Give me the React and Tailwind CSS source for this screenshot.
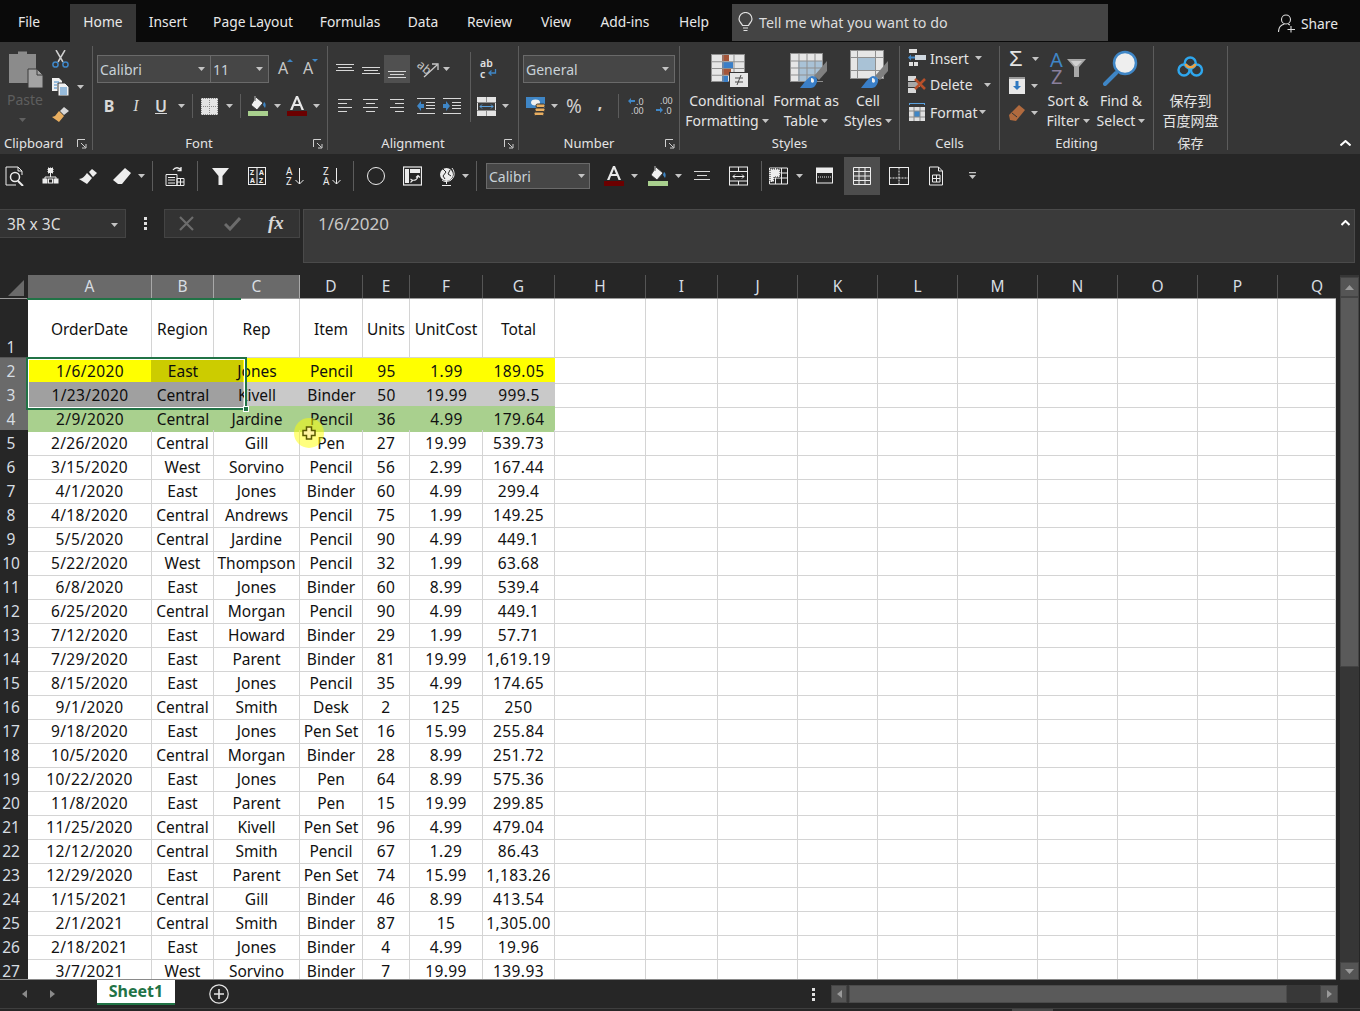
import React from 'react'

const COLS = 'grid grid-cols-[28px_124px_62px_86px_63px_47px_73px_72px_91px_72px_80px_80px_80px_80px_80px_80px_80px_58px]'
const LETTERS = ['A', 'B', 'C', 'D', 'E', 'F', 'G', 'H', 'I', 'J', 'K', 'L', 'M', 'N', 'O', 'P', 'Q']

const DATA = [
  ['OrderDate', 'Region', 'Rep', 'Item', 'Units', 'UnitCost', 'Total'],
  ['1/6/2020', 'East', 'Jones', 'Pencil', '95', '1.99', '189.05'],
  ['1/23/2020', 'Central', 'Kivell', 'Binder', '50', '19.99', '999.5'],
  ['2/9/2020', 'Central', 'Jardine', 'Pencil', '36', '4.99', '179.64'],
  ['2/26/2020', 'Central', 'Gill', 'Pen', '27', '19.99', '539.73'],
  ['3/15/2020', 'West', 'Sorvino', 'Pencil', '56', '2.99', '167.44'],
  ['4/1/2020', 'East', 'Jones', 'Binder', '60', '4.99', '299.4'],
  ['4/18/2020', 'Central', 'Andrews', 'Pencil', '75', '1.99', '149.25'],
  ['5/5/2020', 'Central', 'Jardine', 'Pencil', '90', '4.99', '449.1'],
  ['5/22/2020', 'West', 'Thompson', 'Pencil', '32', '1.99', '63.68'],
  ['6/8/2020', 'East', 'Jones', 'Binder', '60', '8.99', '539.4'],
  ['6/25/2020', 'Central', 'Morgan', 'Pencil', '90', '4.99', '449.1'],
  ['7/12/2020', 'East', 'Howard', 'Binder', '29', '1.99', '57.71'],
  ['7/29/2020', 'East', 'Parent', 'Binder', '81', '19.99', '1,619.19'],
  ['8/15/2020', 'East', 'Jones', 'Pencil', '35', '4.99', '174.65'],
  ['9/1/2020', 'Central', 'Smith', 'Desk', '2', '125', '250'],
  ['9/18/2020', 'East', 'Jones', 'Pen Set', '16', '15.99', '255.84'],
  ['10/5/2020', 'Central', 'Morgan', 'Binder', '28', '8.99', '251.72'],
  ['10/22/2020', 'East', 'Jones', 'Pen', '64', '8.99', '575.36'],
  ['11/8/2020', 'East', 'Parent', 'Pen', '15', '19.99', '299.85'],
  ['11/25/2020', 'Central', 'Kivell', 'Pen Set', '96', '4.99', '479.04'],
  ['12/12/2020', 'Central', 'Smith', 'Pencil', '67', '1.29', '86.43'],
  ['12/29/2020', 'East', 'Parent', 'Pen Set', '74', '15.99', '1,183.26'],
  ['1/15/2021', 'Central', 'Gill', 'Binder', '46', '8.99', '413.54'],
  ['2/1/2021', 'Central', 'Smith', 'Binder', '87', '15', '1,305.00'],
  ['2/18/2021', 'East', 'Jones', 'Binder', '4', '4.99', '19.96'],
  ['3/7/2021', 'West', 'Sorvino', 'Binder', '7', '19.99', '139.93'],
]

const ROW_FILL = { 1: 'bg-[#ffff00]', 2: 'bg-[#c9c9c9]', 3: 'bg-[#a9d08e]' }

const Caret = ({ className = '' }) => (
  <svg className={`shrink-0 ${className}`} width="7" height="4" viewBox="0 0 7 4"><path d="M0 0h7L3.5 4z" fill="#c4c4c4" /></svg>
)

const Divider = ({ className = '' }) => <div className={`w-px shrink-0 bg-[#5c5c5c] ${className}`} />

const Launcher = ({ className = '' }) => (
  <svg className={`shrink-0 ${className}`} width="10" height="10" viewBox="0 0 10 10" fill="none" stroke="#cfcfcf">
    <path d="M.5 8V.5H8" />
    <path d="M4 4l4.5 4.5M9 5v4H5" />
  </svg>
)

const Lines = ({ rows, w = 18 }) => (
  <svg className="shrink-0" width={w} height="20" viewBox={`0 0 ${w} 20`} stroke="#d8d8d8">
    {rows.map(([x1, x2, y], i) => <path key={i} d={`M${x1} ${y}.5H${x2}`} />)}
  </svg>
)

const ClipIcon = () => (
  <svg className="shrink-0" width="35" height="38" viewBox="0 0 35 38">
    <path d="M0 4h9V1.500h9V4h9v29H0z" fill="#8b8b8b" />
    <path d="M19 19h9l6 6v13H19z" fill="#a3a3a3" stroke="#3a3a3a" />
    <path d="M28 19v6h6" fill="none" stroke="#3a3a3a" />
  </svg>
)

const CutIcon = () => (
  <svg className="shrink-0" width="17" height="18" viewBox="0 0 17 18" fill="none">
    <path d="M4 0l7 12M13 0L6 12" stroke="#cfcfcf" strokeWidth="1.500" />
    <circle cx="3.500" cy="14.500" r="2.600" stroke="#3f86c6" strokeWidth="1.500" />
    <circle cx="13.500" cy="14.500" r="2.600" stroke="#3f86c6" strokeWidth="1.500" />
  </svg>
)

const CopyIcon = () => (
  <svg className="shrink-0" width="17" height="18" viewBox="0 0 17 18">
    <path d="M0 0h7l3 3v10H0z" fill="#f0f0f0" />
    <path d="M6 5h7l4 4v9H6z" fill="#f0f0f0" stroke="#363636" />
    <path d="M2 4h5M2 7h3M2 10h3" stroke="#3f86c6" />
    <path d="M8 10h7M8 12h7M8 14h7M8 16h7" stroke="#3f86c6" />
  </svg>
)

const PainterIcon = () => (
  <svg className="shrink-0" width="18" height="16" viewBox="0 0 18 16">
    <path d="M12 0l5 4-5 4-4-4z" fill="#d8d8d8" />
    <path d="M7 4l5 5-5 6-7-5 3-1z" fill="#e8ae60" />
  </svg>
)

const GrowA = ({ up }) => (
  <svg className="shrink-0 overflow-visible" width="15" height="20" viewBox="0 0 15 20">
    <text x="0" y="15" fontSize="16" fontFamily="'Noto Sans', sans-serif" fill="#c8c8c8">A</text>
    <path d={up ? 'M9 3l3-3 3 3z' : 'M9 0h6l-3 3z'} fill="#3f86c6" />
  </svg>
)

const BorderIcon = () => (
  <svg className="shrink-0" width="17" height="17" viewBox="0 0 17 17">
    <rect width="17" height="17" fill="#e4e4e4" />
    <path d="M8.500 0v17M0 8.500h17M.5 0v17M16.500 0v17M0 .5h17M0 16.500h17" stroke="#8c8c8c" strokeDasharray="1 1" />
  </svg>
)

const FillIcon = ({ w = 20 }) => (
  <svg className="shrink-0" width={w} height="20" viewBox="0 0 20 20">
    <path d="M8 1l7 6-6 7-6-5z" fill="#f0f0f0" stroke="#363636" />
    <path d="M7 0v5" stroke="#8c8c8c" strokeWidth="1.500" />
    <path d="M16 6c2 1 2 4 1 6l-2-3z" fill="#3f86c6" />
    <rect y="15" width="20" height="5" fill="#a9d08e" />
  </svg>
)

const FontAIcon = () => (
  <svg className="shrink-0" width="20" height="20" viewBox="0 0 20 20">
    <path d="M3 14L9 0h2l6 14h-2.500l-1.500-4H7l-1.500 4zM8 8h4l-2-5z" fill="#e8e8e8" fillRule="evenodd" />
    <rect y="15" width="20" height="5" fill="#6b0000" />
  </svg>
)

const OrientIcon = () => (
  <svg className="shrink-0 overflow-visible" width="24" height="20" viewBox="0 0 24 20" fill="none" stroke="#c8c8c8">
    <text x="1" y="11" fontSize="12" fill="#c8c8c8" stroke="none" fontFamily="'Noto Sans', sans-serif" transform="rotate(40 6 8)">ab</text>
    <path d="M8 18L21 6M16 5h6v6" strokeWidth="1.300" />
  </svg>
)

const WrapIcon = () => (
  <svg className="shrink-0 overflow-visible" width="17" height="20" viewBox="0 0 17 20">
    <text x="0" y="8" fontSize="10.500" fill="#e0e0e0" fontFamily="'Noto Sans', sans-serif" fontWeight="600">ab</text>
    <text x="0" y="19" fontSize="10.500" fill="#e0e0e0" fontFamily="'Noto Sans', sans-serif" fontWeight="600">c</text>
    <path d="M15.500 10v4H9M11.500 11.500L9 14l2.500 2.500" fill="none" stroke="#3f86c6" strokeWidth="1.300" />
  </svg>
)

const IndentIcon = ({ flip }) => (
  <svg className="shrink-0" width="18" height="16" viewBox="0 0 18 16" stroke="#d8d8d8">
    <path d="M0 .5h18M9 4.500h9M9 7.500h9M9 10.500h9M0 15.500h18" />
    {flip
      ? <path d="M0 6h3V3l4 5-4 5v-3H0z" fill="#3f86c6" stroke="none" />
      : <path d="M7 6H4V3L0 8l4 5v-3h3z" fill="#3f86c6" stroke="none" />}
  </svg>
)

const MergeIcon = () => (
  <svg className="shrink-0" width="19" height="19" viewBox="0 0 19 19">
    <rect width="19" height="19" fill="#e4e4e4" />
    <path d="M0 5.500h19M0 13.500h19M9.500 0v5M9.500 14v5" stroke="#8c8c8c" />
    <rect x="1" y="6" width="17" height="7" fill="#3a3a3a" />
    <path d="M3 9.500h13M5 7.500l-2 2 2 2M14 7.500l2 2-2 2" fill="none" stroke="#5aa0dc" />
  </svg>
)

const AccountingIcon = () => (
  <svg className="shrink-0" width="20" height="19" viewBox="0 0 20 19">
    <rect width="19" height="11" fill="#3f86c6" />
    <ellipse cx="9.500" cy="5.500" rx="4.500" ry="3" fill="#f0f0f0" />
    <rect x="10" y="7" width="9" height="3.500" rx="1.500" fill="#e8ae60" stroke="#363636" />
    <rect x="9" y="11" width="10" height="3.500" rx="1.500" fill="#e8ae60" stroke="#363636" />
    <rect x="8" y="15" width="10" height="3.500" rx="1.500" fill="#e8ae60" stroke="#363636" />
  </svg>
)

const DecimalIcon = ({ more }) => (
  <svg className="shrink-0 overflow-visible" width="18" height="18" viewBox="0 0 18 18" fontFamily="'Noto Sans', sans-serif" fontSize="9" fill="#d0d0d0">
    {more ? (
      <>
        <text x="5" y="7">.00</text>
        <path d="M1 12h4v-2l3 3-3 3v-2H1z" fill="#3f86c6" />
        <text x="9" y="17">.0</text>
      </>
    ) : (
      <>
        <path d="M0 4l3-3v2h4v2H3v2z" fill="#3f86c6" />
        <text x="8" y="8">.0</text>
        <text x="3" y="17">.00</text>
      </>
    )}
  </svg>
)

const GridTiles = ({ x, y, w, h, cols, rows }) => {
  const out = []
  for (let c = 1; c < cols; c++) out.push(`M${x + (w * c) / cols} ${y}v${h}`)
  for (let r = 1; r < rows; r++) out.push(`M${x} ${y + (h * r) / rows}h${w}`)
  return <path d={out.join('')} stroke="#8f8f8f" fill="none" />
}

const CondIcon = () => (
  <svg className="shrink-0 ml-[6px]" width="38" height="35" viewBox="0 0 38 35">
    <rect x=".5" y=".5" width="33" height="27" fill="#e6e6e6" stroke="#8f8f8f" />
    <rect x="11" y="1" width="7" height="6" fill="#a5563a" />
    <rect x="11" y="8" width="11" height="6" fill="#3a7fc8" />
    <rect x="11" y="15" width="9" height="6" fill="#a5563a" />
    <rect x="11" y="22" width="6" height="6" fill="#3a7fc8" />
    <GridTiles x={1} y={1} w={33} h={27} cols={3} rows={4} />
    <rect x="18.500" y="18.500" width="19" height="15" fill="#e6e6e6" stroke="#363636" />
    <path d="M24 24h8M24 28h8M30 21l-4 10" stroke="#4a4a4a" fill="none" />
  </svg>
)

const BrushTip = () => (
  <>
    <path d="M37 8v10l-8 9-5-4z" fill="#808080" />
    <path d="M10 35C14 30 18 24 22 23c4 0 6 3 5 6-1 3-3 6-6 6z" fill="#3a7fc8" />
    <path d="M21 25c2 0 3 1 3 3s-2 2-3 1z" fill="#f0f0f0" />
  </>
)

const FormatTableIcon = () => (
  <svg className="shrink-0 ml-[6px]" width="38" height="35" viewBox="0 0 38 35">
    <rect x=".5" y=".5" width="32" height="28" fill="#e6e6e6" stroke="#8f8f8f" />
    <rect x="8" y="8" width="24" height="20" fill="#a9c2d6" />
    <GridTiles x={1} y={1} w={32} h={28} cols={4} rows={4} />
    <path d="M22 28l12-14v14z" fill="#363636" />
    <BrushTip />
  </svg>
)

const CellStylesIcon = () => (
  <svg className="shrink-0 ml-[2px]" width="38" height="38" viewBox="0 0 38 38">
    <rect x=".5" y=".5" width="33" height="28" fill="#e6e6e6" stroke="#8f8f8f" />
    <rect x="7.500" y="7.500" width="18" height="13" fill="#a9c2d6" stroke="#8f8f8f" />
    <path d="M0 7.500h33M0 20.500h33M7.500 0v28M25.500 0v28" stroke="#8f8f8f" fill="none" />
    <g transform="translate(1 3)"><BrushTip /></g>
  </svg>
)

const CellsIcon = ({ kind }) => (
  <svg className="shrink-0" width="18" height="18" viewBox="0 0 18 18">
    {kind === 'insert' && (
      <>
        <rect x="1" y="0" width="8" height="4" fill="#e0e0e0" />
        <rect x="7" y="6" width="11" height="5" fill="#cfd8e0" />
        <rect x="1" y="13" width="4" height="4" fill="#e0e0e0" />
        <rect x="6" y="13" width="4" height="4" fill="#e0e0e0" />
        <path d="M0 8.500l3-3v2h4v2H3v2z" fill="#3f86c6" />
      </>
    )}
    {kind === 'delete' && (
      <>
        <rect x="0" y="0" width="8" height="5" fill="#d8d8d8" />
        <rect x="0" y="6" width="12" height="5" fill="#a8a8a8" />
        <rect x="0" y="12" width="8" height="5" fill="#d8d8d8" />
        <path d="M7 3l10 10M17 3L7 13" stroke="#b8502a" strokeWidth="2.500" />
      </>
    )}
    {kind === 'format' && (
      <>
        <path d="M1 .5h16M1.500 0v2M16.500 0v2" stroke="#5aa0dc" />
        <rect x="1" y="4" width="16" height="14" fill="#e0e0e0" />
        <rect x="6" y="8" width="6" height="6" fill="#3f86c6" />
        <path d="M1 8h16M1 14h16M6 4v14M12 4v14" stroke="#8a8a8a" />
      </>
    )}
  </svg>
)

const SortFilterIcon = () => (
  <svg className="shrink-0 overflow-visible" width="36" height="32" viewBox="0 0 36 32" fontFamily="'Noto Sans', sans-serif" fontSize="20">
    <text x="0" y="15" fill="#3f86c6">A</text>
    <text x="1" y="32" fill="#8a7f9c">Z</text>
    <path d="M17 7h19l-7 8v10h-5V15z" fill="#a8a8a8" />
    <path d="M21 9h11l-5 5h-2z" fill="#d0d0d0" />
  </svg>
)

const FindIcon = () => (
  <svg className="shrink-0" width="36" height="36" viewBox="0 0 36 36" fill="none">
    <path d="M13 23L2 34" stroke="#3f86c6" strokeWidth="4" strokeLinecap="round" />
    <circle cx="22" cy="13" r="11" fill="#eeeeee" stroke="#3f86c6" strokeWidth="2.500" />
  </svg>
)

const BaiduIcon = () => (
  <svg className="shrink-0" width="27" height="22" viewBox="0 0 27 22" fill="none" strokeWidth="2.400">
    <circle cx="7" cy="15" r="5.500" stroke="#2ea7ee" />
    <circle cx="19.500" cy="15" r="5.500" stroke="#2ea7ee" />
    <circle cx="13.250" cy="8" r="5.500" stroke="#2ea7ee" />
    <path d="M8.500 9a5.500 5.500 0 0 0 10 0" stroke="#f0a040" />
  </svg>
)

const QatIcon = ({ w = 20, children }) => (
  <svg className="shrink-0" width={w} height="20" viewBox={`0 0 ${w} 20`} fill="none" stroke="#ededed">{children}</svg>
)

const BigButton = ({ width, icon, top, bottom, pt = 'pt-[11px]' }) => (
  <div className={`flex flex-col items-center ${width}`}>
    <div className={`h-[49px] ${pt}`}>{icon}</div>
    <div className="leading-[20px] whitespace-nowrap">{top}</div>
    <div className="leading-[20px] whitespace-nowrap flex items-center gap-[3px]">{bottom}<Caret /></div>
  </div>
)

const Combo = ({ width, label }) => (
  <div className={`h-[28px] flex items-center border border-[#6a6a6a] bg-[#464646] text-[#c9d2d8] pl-[2px] ${width}`}>
    <span>{label}</span>
    <Caret className="ml-auto mr-[5px]" />
  </div>
)

const GroupLabel = ({ children }) => <div className="h-[22px] leading-[22px] text-center text-[13px]">{children}</div>

function TitleBar() {
  const tabs = [
    ['Insert', 'w-[64px]'],
    ['Page Layout', 'w-[106px]'],
    ['Formulas', 'w-[88px]'],
    ['Data', 'w-[58px]'],
    ['Review', 'w-[75px]'],
    ['View', 'w-[58px]'],
    ['Add-ins', 'w-[80px]'],
    ['Help', 'w-[58px]'],
  ]
  return (
    <div className="h-[42px] bg-[#0a0a0a] flex text-[13.800px] text-[#e8e8e8] shrink-0">
      <div className="w-[70px] pl-[18px] pt-[12px] leading-[20px]">File</div>
      <div className="w-[66px] mt-[4px] bg-[#363636] text-center pt-[8px] leading-[20px]">Home</div>
      {tabs.map(([t, w]) => <div key={t} className={`${w} text-center pt-[12px] leading-[20px]`}>{t}</div>)}
      <div className="ml-[9px] mt-[4px] mb-px w-[376px] bg-[#444444] flex items-center pl-[6px] gap-[6px] text-[14.300px] text-[#dcdcdc]">
        <svg className="-mt-[2px]" width="15" height="20" viewBox="0 0 15 20" fill="none" stroke="#e0e0e0" strokeWidth="1.200">
          <path d="M4.500 13.500C3.500 11 1 10 1 7a6.500 6.500 0 0 1 13 0c0 3-2.500 4-3.500 6.500zM5 16h5M5.500 18.500h4" />
        </svg>
        <span>Tell me what you want to do</span>
      </div>
      <div className="ml-auto mr-[22px] flex items-center gap-[5px] pt-[6px] text-[13.800px]">
        <svg className="-mt-[2px]" width="18" height="19" viewBox="0 0 18 19" fill="none" stroke="#dcdcdc" strokeWidth="1.100">
          <circle cx="8" cy="5.500" r="4.500" />
          <path d="M.5 18c0-4 2-7 6-8M10 10l2 1M13 12v6.500M9.500 15.500H17" />
        </svg>
        <span>Share</span>
      </div>
    </div>
  )
}

function Ribbon() {
  return (
    <div className="h-[112px] bg-[#363636] flex text-[14px] text-[#e4e4e4] shrink-0">
      {/* Clipboard */}
      <div className="w-[92px] flex flex-col shrink-0">
        <div className="h-[90px] flex">
          <div className="w-[52px] flex flex-col pl-[9px] pt-[8px]">
            <ClipIcon />
            <div className="text-[#5e5e5e] -ml-[2px] mt-[2px] leading-[20px]">Paste</div>
            <Caret className="ml-[10px] mt-[8px] opacity-30" />
          </div>
          <div className="flex flex-col pt-[8px]">
            <CutIcon />
            <div className="flex items-center mt-[10px]"><CopyIcon /><Caret className="ml-[8px]" /></div>
            <div className="mt-[11px]"><PainterIcon /></div>
          </div>
        </div>
        <div className="h-[22px] flex items-center pl-[4px] pt-px text-[13px]">
          <span className="w-[73px]">Clipboard</span>
          <Launcher />
        </div>
      </div>
      <Divider className="my-[4px]" />

      {/* Font */}
      <div className="w-[234px] flex flex-col shrink-0">
        <div className="h-[90px]">
          <div className="flex items-center pt-[13px]">
            <div className="ml-[4px] flex">
              <Combo width="w-[114px]" label="Calibri" />
              <Combo width="w-[59px] -ml-px" label="11" />
            </div>
            <div className="ml-[9px]"><GrowA up /></div>
            <div className="ml-[10px]"><GrowA /></div>
          </div>
          <div className="flex items-center h-[24px] mt-[11px]">
            <div className="ml-[5px] w-[22px] text-center font-bold text-[16px] text-[#d8d8d8]">B</div>
            <div className="ml-[5px] w-[22px] text-center italic text-[16px] text-[#d8d8d8]" style={{ fontFamily: "'Liberation Serif', serif" }}>I</div>
            <div className="ml-[3px] w-[22px] text-center font-semibold text-[16px] text-[#d8d8d8] underline">U</div>
            <Caret className="ml-[6px]" />
            <Divider className="ml-[7px] h-[24px]" />
            <div className="ml-[8px]"><BorderIcon /></div>
            <Caret className="ml-[8px]" />
            <Divider className="ml-[7px] h-[24px]" />
            <div className="ml-[7px]"><FillIcon /></div>
            <Caret className="ml-[6px]" />
            <div className="ml-[6px]"><FontAIcon /></div>
            <Caret className="ml-[6px]" />
          </div>
        </div>
        <div className="h-[22px] flex items-center pt-px text-[13px]">
          <span className="w-[212px] text-center">Font</span>
          <Launcher className="ml-[8px]" />
        </div>
      </div>
      <Divider className="my-[4px]" />

      {/* Alignment */}
      <div className="w-[190px] flex flex-col shrink-0">
        <div className="h-[90px] flex">
          <div className="w-[142px]">
            <div className="flex items-center pt-[13px] h-[41px]">
              <div className="ml-[8px]"><Lines rows={[[0, 18, 5], [2, 16, 8], [0, 18, 11]]} /></div>
              <div className="ml-[8px]"><Lines rows={[[0, 18, 8], [2, 16, 11], [0, 18, 14]]} /></div>
              <div className="ml-[4px] w-[26px] h-[28px] bg-[#505050] flex items-center justify-center">
                <Lines rows={[[0, 18, 12], [2, 16, 15], [0, 18, 18]]} />
              </div>
              <div className="ml-[6px]"><OrientIcon /></div>
              <Caret className="ml-[3px]" />
            </div>
            <div className="flex items-center h-[24px] mt-[11px]">
              <div className="ml-[10px]"><Lines w={14} rows={[[0, 14, 3], [0, 9, 7], [0, 14, 11], [0, 9, 15]]} /></div>
              <div className="ml-[11px]"><Lines w={15} rows={[[0, 15, 3], [3, 12, 7], [0, 15, 11], [3, 12, 15]]} /></div>
              <div className="ml-[12px]"><Lines w={14} rows={[[0, 14, 3], [5, 14, 7], [0, 14, 11], [5, 14, 15]]} /></div>
              <div className="ml-[13px]"><IndentIcon /></div>
              <div className="ml-[8px]"><IndentIcon flip /></div>
            </div>
          </div>
          <Divider className="mt-[10px] h-[70px]" />
          <div>
            <div className="ml-[9px] pt-[17px] h-[41px]"><WrapIcon /></div>
            <div className="flex items-center h-[24px] mt-[11px] ml-[6px]">
              <MergeIcon />
              <Caret className="ml-[6px]" />
            </div>
          </div>
        </div>
        <div className="h-[22px] flex items-center pt-px text-[13px]">
          <span className="w-[170px] text-center">Alignment</span>
          <Launcher className="ml-[6px]" />
        </div>
      </div>
      <Divider className="my-[4px]" />

      {/* Number */}
      <div className="w-[160px] flex flex-col shrink-0">
        <div className="h-[90px]">
          <div className="pt-[13px] pl-[4px]"><Combo width="w-[152px]" label="General" /></div>
          <div className="flex items-center h-[24px] mt-[11px]">
            <div className="ml-[7px]"><AccountingIcon /></div>
            <Caret className="ml-[5px]" />
            <div className="ml-[6px] w-[20px] text-center text-[19px] text-[#cfcfcf]">%</div>
            <div className="ml-[6px] w-[20px] text-center font-bold text-[16px] text-[#cfcfcf] -mt-[6px]">,</div>
            <Divider className="ml-[8px] h-[24px]" />
            <div className="ml-[9px]"><DecimalIcon /></div>
            <div className="ml-[9px]"><DecimalIcon more /></div>
          </div>
        </div>
        <div className="h-[22px] flex items-center pt-px text-[13px]">
          <span className="w-[140px] text-center">Number</span>
          <Launcher className="ml-[6px]" />
        </div>
      </div>
      <Divider className="my-[4px]" />

      {/* Styles */}
      <div className="w-[219px] flex flex-col shrink-0">
        <div className="h-[90px] flex">
          <BigButton width="w-[94px]" icon={<CondIcon />} top="Conditional" bottom="Formatting" pt="pt-[12px]" />
          <BigButton width="w-[64px]" icon={<FormatTableIcon />} top="Format as" bottom="Table" />
          <BigButton width="w-[60px]" icon={<CellStylesIcon />} top="Cell" bottom="Styles" pt="pt-[8px]" />
        </div>
        <GroupLabel>Styles</GroupLabel>
      </div>
      <Divider className="my-[4px]" />

      {/* Cells */}
      <div className="w-[99px] flex flex-col shrink-0">
        <div className="h-[90px] pt-[3px]">
          <div className="h-[26px] flex items-center pl-[8px]"><CellsIcon kind="insert" /><span className="ml-[4px]">Insert</span><Caret className="ml-[6px]" /></div>
          <div className="h-[27px] flex items-center pl-[8px]"><CellsIcon kind="delete" /><span className="ml-[4px]">Delete</span><Caret className="ml-[11px]" /></div>
          <div className="h-[28px] flex items-center pl-[8px]"><CellsIcon kind="format" /><span className="ml-[4px]">Format</span><Caret className="ml-px" /></div>
        </div>
        <GroupLabel>Cells</GroupLabel>
      </div>
      <Divider className="my-[4px]" />

      {/* Editing */}
      <div className="w-[153px] flex flex-col shrink-0">
        <div className="h-[90px] flex">
          <div className="w-[42px] pl-[9px] pt-[4px]">
            <div className="h-[26px] flex items-center">
              <span className="w-[16px] text-[22px] leading-[22px] text-[#e4e4e4]" style={{ fontFamily: "'Liberation Sans', sans-serif" }}>Σ</span>
              <Caret className="ml-[7px]" />
            </div>
            <div className="h-[27px] flex items-center">
              <svg className="shrink-0" width="16" height="17" viewBox="0 0 16 17">
                <rect width="16" height="17" fill="#e8e8e8" />
                <rect width="16" height="2" fill="#9a9a9a" />
                <path d="M6.500 4h3v5h2.500l-4 4-4-4h2.500z" fill="#2f78c0" />
              </svg>
              <Caret className="ml-[6px]" />
            </div>
            <div className="h-[27px] flex items-center">
              <svg className="shrink-0" width="16" height="16" viewBox="0 0 16 16">
                <path d="M10 0l6 5-9 11-6-1-1-5z" fill="#b06a3e" />
                <path d="M3 8l5 4" stroke="#363636" />
              </svg>
              <Caret className="ml-[6px]" />
            </div>
          </div>
          <BigButton icon={<SortFilterIcon />} width="w-[52px]" top="Sort &" bottom="Filter" pt="pt-[10px]" />
          <BigButton icon={<FindIcon />} width="w-[54px]" top="Find &" bottom="Select" pt="pt-[8px]" />
        </div>
        <GroupLabel>Editing</GroupLabel>
      </div>
      <Divider className="my-[4px]" />

      {/* Baidu save */}
      <div className="w-[73px] flex flex-col shrink-0" style={{ fontFamily: "'Noto Sans', 'Noto Sans CJK SC', sans-serif" }}>
        <div className="h-[90px] flex flex-col items-center">
          <div className="h-[49px] pt-[13px]"><BaiduIcon /></div>
          <div className="leading-[20px]">保存到</div>
          <div className="leading-[20px]">百度网盘</div>
        </div>
        <GroupLabel>保存</GroupLabel>
      </div>
      <Divider className="my-[4px]" />

      <div className="flex-1 flex items-end justify-end pr-[9px] pb-[8px]">
        <svg width="11" height="6" viewBox="0 0 11 6" fill="none" stroke="#ffffff" strokeWidth="2"><path d="M.5 5.500l5-4.500 5 4.500" /></svg>
      </div>
    </div>
  )
}

function QuickBar() {
  return (
    <div className="h-[44px] bg-[#262626] flex items-center text-[14px] shrink-0">
      <div className="ml-[5px]">
        <QatIcon>
          <path d="M11 19H1V1h12l4 4v4M13 1v4h4" />
          <circle cx="10" cy="11" r="4.500" strokeWidth="1.500" />
          <path d="M13 15l5 5" strokeWidth="2" />
        </QatIcon>
      </div>
      <div className="ml-[17px]">
        <QatIcon w={17}>
          <path d="M8.500 6v5M3 14v-3h11v3" />
          <rect x="6" y="2" width="5" height="5" fill="#ededed" strokeDasharray="1 1" />
          <rect x="1" y="13" width="4" height="4" fill="#ededed" />
          <rect x="6.500" y="13" width="4" height="4" fill="#262626" />
          <rect x="12" y="13" width="4" height="4" fill="#ededed" />
        </QatIcon>
      </div>
      <div className="ml-[20px]">
        <QatIcon w={19}>
          <path d="M13 3l5 4-4 4-4-5z" fill="#ededed" stroke="none" />
          <path d="M8 7l5 5-5 6-8-5c3 0 6-3 8-6z" fill="#ededed" stroke="none" />
        </QatIcon>
      </div>
      <div className="ml-[15px]">
        <QatIcon w={19}>
          <path d="M12 2l6 5-9 11-4 0-5-4z" fill="#ededed" stroke="none" />
        </QatIcon>
      </div>
      <Caret className="ml-[6px]" />
      <Divider className="ml-[7px] h-[30px]" />
      <div className="ml-[12px]">
        <QatIcon>
          <path d="M1 8.500h11v11H1zM3 11.500h7M3 14h7M3 17h7M12 12.500h7v7h-7zM12 16h7M15.500 12.500v7" />
          <path d="M8 4c2-3 6-3 8 0M16 1v3.500h-3.500" stroke="#ededed" strokeWidth="1.300" />
        </QatIcon>
      </div>
      <Divider className="ml-[12px] h-[30px]" />
      <div className="ml-[13px]">
        <QatIcon w={19}>
          <path d="M1 2h17l-6.500 8v9h-4v-9z" fill="#ededed" stroke="none" />
        </QatIcon>
      </div>
      <div className="ml-[18px]">
        <svg className="shrink-0 overflow-visible" width="18" height="18" viewBox="0 0 18 18" fontFamily="'Noto Sans', sans-serif" fontSize="7" fontWeight="700">
          <rect x=".5" y=".5" width="17" height="17" fill="#262626" stroke="#ededed" />
          <path d="M9 0v18" stroke="#ededed" />
          <text x="2" y="8" fill="#ededed">Z</text>
          <text x="2" y="16" fill="#ededed">A</text>
          <text x="11" y="8" fill="#ededed">A</text>
          <text x="11" y="16" fill="#ededed">Z</text>
        </svg>
      </div>
      <div className="ml-[20px]">
        <svg className="shrink-0 overflow-visible" width="18" height="20" viewBox="0 0 18 20" fontFamily="'Noto Sans', sans-serif" fontSize="10" fill="#ededed">
          <text x="0" y="9">A</text>
          <text x="0" y="19">Z</text>
          <path d="M13.500 2v16M9.500 14l4 4 4-4" fill="none" stroke="#ededed" />
        </svg>
      </div>
      <div className="ml-[19px]">
        <svg className="shrink-0 overflow-visible" width="18" height="20" viewBox="0 0 18 20" fontFamily="'Noto Sans', sans-serif" fontSize="10" fill="#ededed">
          <text x="0" y="9">Z</text>
          <text x="0" y="19">A</text>
          <path d="M13.500 2v16M9.500 14l4 4 4-4" fill="none" stroke="#ededed" />
        </svg>
      </div>
      <Divider className="ml-[12px] h-[30px]" />
      <div className="ml-[13px]">
        <QatIcon w={18}><circle cx="9" cy="10" r="8.500" /></QatIcon>
      </div>
      <div className="ml-[18px]">
        <QatIcon w={19}>
          <rect x=".5" y="1" width="18" height="18" strokeWidth="1.200" />
          <rect x="2" y="3" width="4" height="14" fill="#ededed" stroke="none" />
          <rect x="7" y="3" width="10" height="4" fill="#ededed" stroke="none" />
          <path d="M9 14c3 1 6-1 6-4M13 11.500l2-2 2 2M7.500 13l2 1.500-2 2" strokeWidth="1.100" />
        </QatIcon>
      </div>
      <div className="ml-[15px]">
        <QatIcon w={19}>
          <circle cx="9.500" cy="8.500" r="6.500" fill="#ededed" stroke="none" />
          <path d="M6 3l3 3-3 4 2 3M13 4l-2 4 3 2" stroke="#262626" />
          <path d="M15 2c3 4 3 9-1 12-3 2-7 2-9 0M9.500 15v3M5 19.500h9" />
        </QatIcon>
      </div>
      <Caret className="ml-[6px]" />
      <Divider className="ml-[7px] h-[30px]" />
      <div className="ml-[9px] flex items-center h-[26px] w-[104px] border border-[#6a6a6a] bg-[#464646] text-[#c9d2d8] pl-[2px]">
        Calibri
        <Caret className="ml-auto mr-[4px]" />
      </div>
      <div className="ml-[14px]"><FontAIcon /></div>
      <Caret className="ml-[7px]" />
      <div className="ml-[10px]"><FillIcon /></div>
      <Caret className="ml-[7px]" />
      <div className="ml-[12px]"><Lines w={16} rows={[[0, 16, 5], [3, 13, 9], [0, 16, 13]]} /></div>
      <div className="ml-[19px]">
        <QatIcon w={19}>
          <rect x=".5" y="1" width="18" height="18" />
          <path d="M0 5.500h19M0 15h19M9.500 1v4M9.500 15v4M4 10.500h11M6 8.500l-2 2 2 2M13 8.500l2 2-2 2" />
        </QatIcon>
      </div>
      <Divider className="ml-[13px] h-[30px]" />
      <div className="ml-[7px]">
        <QatIcon w={19}>
          <path d="M.5 2h18v16h-18zM0 7h19M0 12h19M6.500 2v16M12.500 2v16" />
          <path d="M1 3h10v8H5v5H1z" fill="#ededed" stroke="#262626" strokeDasharray="1 1" />
        </QatIcon>
      </div>
      <Caret className="ml-[8px]" />
      <div className="ml-[13px]">
        <QatIcon w={17}>
          <rect x=".5" y="2" width="16" height="15" />
          <rect x="0" y="2" width="17" height="5" fill="#ededed" stroke="none" />
          <path d="M2 11h13" strokeDasharray="1 1" />
        </QatIcon>
      </div>
      <div className="ml-[11px] w-[36px] h-[38px] bg-[#4d4d4d] flex items-center justify-center">
        <QatIcon w={18}>
          <path d="M.5 1.500h17v17h-17zM.5 5.500h17M.5 10h17M.5 14.500h17M6 1.500v17M12 1.500v17" />
        </QatIcon>
      </div>
      <div className="ml-[9px]">
        <QatIcon>
          <rect x=".5" y="1.500" width="19" height="17" />
          <path d="M10 1.500v17M.5 12h19" strokeDasharray="2 1" />
        </QatIcon>
      </div>
      <div className="ml-[20px]">
        <QatIcon w={14}>
          <path d="M.5 1h9l4 4v14H.5zM9.500 1v4h4M3.500 9h7.500v7H3.500zM7.500 9v7M3.500 12.500H11" />
        </QatIcon>
      </div>
      <div className="ml-[26px]">
        <svg width="7" height="8" viewBox="0 0 7 8"><path d="M0 0h7v1.200H0zM0 3h7L3.500 7z" fill="#c4c4c4" /></svg>
      </div>
    </div>
  )
}

function FormulaRow() {
  return (
    <div className="h-[77px] bg-[#262626] flex items-start pt-[11px] text-[15.500px] shrink-0">
      <div className="w-[126px] h-[29px] bg-[#333333] border border-[#444444] border-l-0 flex items-center pl-[7px] pt-[2px] text-[#dcdcdc]">
        3R x 3C
        <Caret className="ml-auto mr-[7px]" />
      </div>
      <div className="ml-[18px] w-[3px] h-[13px] mt-[8px] flex flex-col justify-between">
        <div className="h-[3px] bg-[#e0e0e0]" />
        <div className="h-[3px] bg-[#e0e0e0]" />
        <div className="h-[3px] bg-[#e0e0e0]" />
      </div>
      <div className="ml-[17px] w-[136px] h-[29px] bg-[#333333] border border-[#444444] flex items-center">
        <svg className="ml-[14px]" width="15" height="15" viewBox="0 0 15 15" stroke="#6c6c6c" strokeWidth="2.200"><path d="M1 1l13 13M14 1L1 14" /></svg>
        <svg className="ml-[30px]" width="17" height="14" viewBox="0 0 17 14" fill="none" stroke="#6c6c6c" strokeWidth="3"><path d="M1 7l5 5L16 1" /></svg>
        <span className="ml-[27px] text-[19px] italic font-bold text-[#d8d8d8]" style={{ fontFamily: "'Liberation Serif', serif" }}>fx</span>
      </div>
      <div className="ml-[3px] w-[1052px] h-[54px] bg-[#3a3a3a] border border-[#4a4a4a] flex justify-between pl-[14px] text-[17px] text-[#c8c8c8]">
        <span className="mt-[2px] leading-[24px]">1/6/2020</span>
        <svg className="mt-[10px] mr-[4px]" width="9" height="6" viewBox="0 0 9 6" fill="none" stroke="#ffffff" strokeWidth="2"><path d="M.5 5l4-4 4 4" /></svg>
      </div>
    </div>
  )
}

function Grid() {
  return (
    <div className="flex flex-1 min-h-0">
      <div className="w-[1336px] flex flex-col shrink-0">
        <div className={`${COLS} h-[23px] text-[15.500px] text-[#d7dde2] shrink-0`}>
          <div className="flex items-end justify-end pr-[4px] pb-[2px]">
            <svg width="16" height="16" viewBox="0 0 16 16"><path d="M16 0v16H0z" fill="#6a6a6a" /></svg>
          </div>
          {LETTERS.map((l, i) => (
            <div key={l} className={`flex items-center ${l === 'Q' ? 'pl-[33px] overflow-hidden' : 'justify-center border-r'} ${i < 3 ? 'bg-[#6a6a6a] border-[#a8a8a8]' : 'border-[#555555]'}`}>{l}</div>
          ))}
        </div>
        <div className="relative flex-1 min-h-0 overflow-hidden bg-white border-b border-[#8a8a8a]">
          <div className="h-px bg-[#9a9a9a]" />
          {DATA.map((row, r) => (
            <div key={r} className={`${COLS} ${r === 0 ? 'h-[59px]' : 'h-[24px]'} text-[15.500px] text-[#111111]`}>
              <div className={`flex justify-center pr-[6px] border-b border-[#555555] text-[#d7dde2] ${r === 0 ? 'items-end pb-[2px] leading-[16px]' : 'items-center pt-[2px]'} ${r >= 1 && r <= 3 ? 'bg-[#6a6a6a]' : 'bg-[#262626]'}`}>{r + 1}</div>
              {LETTERS.map((l, c) => (
                <div key={l} className={`flex items-center justify-center whitespace-nowrap border-b ${r === 0 ? 'pt-[3px]' : 'pt-[2px]'} ${r > 0 && [0, 4, 5, 6].includes(c) ? 'tracking-[0.4px]' : ''} ${c < 7 && ROW_FILL[r] ? `${ROW_FILL[r]} border-transparent` : 'border-r border-[#d4d4d4]'}`}>{row[c]}</div>
              ))}
            </div>
          ))}

          {/* selection, drawn over the cells */}
          <div className="absolute left-[151px] top-[61px] w-[92px] h-[23px] bg-black/20" />
          <div className="absolute left-[28px] top-[84px] w-[215px] h-[24px] bg-black/20" />
          <div className="absolute left-[28px] top-[108px] w-[215px] h-[2px] bg-[#9c9c9c]" />
          <div className="absolute left-[26px] top-[59px] w-[221px] h-[53px] border-2 border-[#217346]">
            <div className="h-full border border-white" />
          </div>
          <div className="absolute left-[243px] top-[108px] w-[6px] h-[6px] bg-[#217346] border border-white" />
          <div className="absolute left-[27px] top-0 w-[214px] h-[2px] bg-[#217346]" />

          {/* mouse highlight */}
          <div className="absolute left-[294px] top-[120px] w-[30px] h-[30px] rounded-full bg-[#ffff00]/50 flex items-center justify-center">
            <svg width="14" height="14" viewBox="0 0 14 14"><path d="M4.500 1h5v3.500H13v5H9.500V13h-5V9.500H1v-5h3.500z" fill="#fff4a0" stroke="#5a5a00" strokeWidth="1.500" /></svg>
          </div>
        </div>
      </div>

      {/* vertical scrollbar */}
      <div className="ml-[4px] w-[19px] flex flex-col pt-[2px] bg-[#363636]">
        <div className="h-[20px] bg-[#555555] border border-[#444444] flex items-center justify-center">
          <svg width="9" height="5" viewBox="0 0 9 5"><path d="M0 5h9L4.500 0z" fill="#9a9a9a" /></svg>
        </div>
        <div className="h-[370px] bg-[#5a5a5a] border border-[#444444]" />
        <div className="mt-auto h-[18px] bg-[#555555] border border-[#444444] flex items-center justify-center">
          <svg width="9" height="5" viewBox="0 0 9 5"><path d="M0 0h9L4.500 5z" fill="#9a9a9a" /></svg>
        </div>
      </div>
    </div>
  )
}

function BottomBar() {
  return (
    <div className="h-[31px] bg-[#262626] flex flex-col shrink-0">
      <div className="h-[28px] flex items-start">
        <svg className="ml-[22px] mt-[10px]" width="5" height="8" viewBox="0 0 5 8"><path d="M5 0v8L0 4z" fill="#8a8a8a" /></svg>
        <svg className="ml-[23px] mt-[10px]" width="5" height="8" viewBox="0 0 5 8"><path d="M0 0v8l5-4z" fill="#8a8a8a" /></svg>
        <div className="ml-[42px] w-[78px] h-[25px] bg-white border-b-2 border-[#217346] text-center text-[16px] font-bold text-[#217346] leading-[22px]">Sheet1</div>
        <svg className="ml-[34px] mt-[4px]" width="20" height="20" viewBox="0 0 20 20" fill="none" stroke="#e4e4e4">
          <circle cx="10" cy="10" r="9.200" strokeWidth="1.200" />
          <path d="M5 10h10M10 5v10" strokeWidth="1.600" />
        </svg>
        <div className="ml-[583px] mt-[8px] w-[3px] h-[13px] flex flex-col justify-between">
          <div className="h-[3px] bg-[#e0e0e0]" />
          <div className="h-[3px] bg-[#e0e0e0]" />
          <div className="h-[3px] bg-[#e0e0e0]" />
        </div>
        <div className="ml-[16px] mt-[5px] w-[507px] h-[18px] bg-[#383838] flex">
          <div className="w-[16px] bg-[#555555] border border-[#444444] flex items-center justify-center">
            <svg width="5" height="8" viewBox="0 0 5 8"><path d="M5 0v8L0 4z" fill="#9a9a9a" /></svg>
          </div>
          <div className="ml-[2px] w-[438px] bg-[#5a5a5a] border border-[#4a4a4a]" />
          <div className="ml-auto w-[18px] bg-[#555555] border border-[#444444] flex items-center justify-center">
            <svg width="5" height="8" viewBox="0 0 5 8"><path d="M0 0v8l5-4z" fill="#9a9a9a" /></svg>
          </div>
        </div>
      </div>
      <div className="h-px bg-[#3e3e3e]" />
      <div className="ml-[1012px] w-[41px] h-[2px] bg-[#484848]" />
    </div>
  )
}

export default function App() {
  return (
    <div className="w-[1360px] h-[1011px] overflow-hidden flex flex-col bg-[#262626]" style={{ fontFamily: "'Noto Sans', sans-serif" }}>
      <TitleBar />
      <Ribbon />
      <QuickBar />
      <FormulaRow />
      <Grid />
      <BottomBar />
    </div>
  )
}
